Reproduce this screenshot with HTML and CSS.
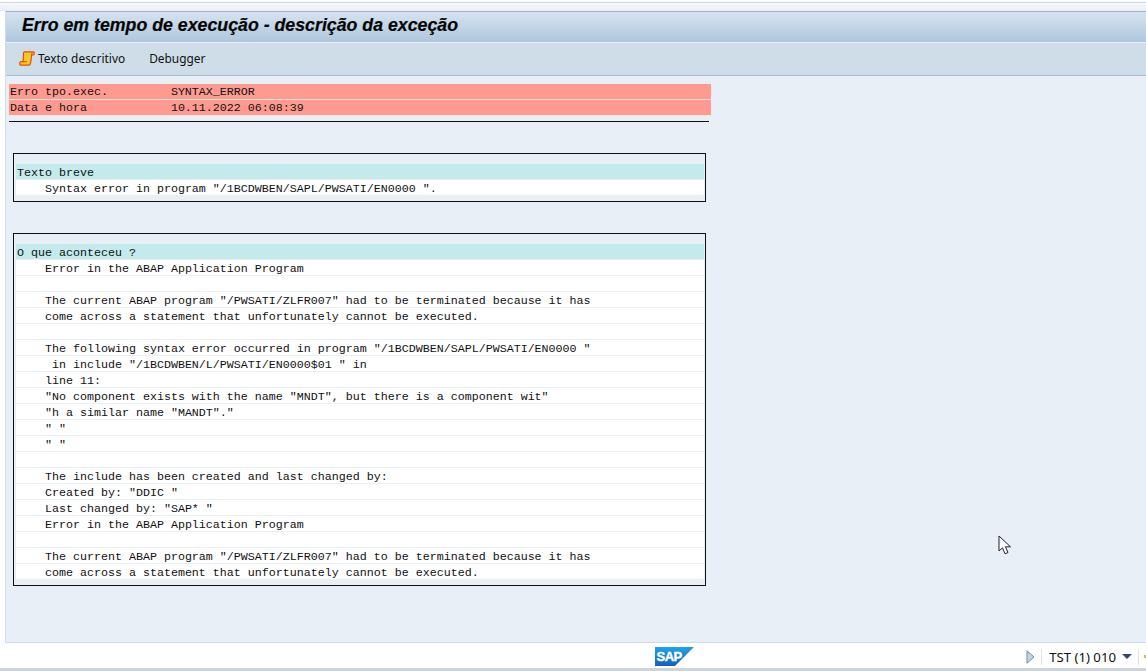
FILE: index.html
```html
<!DOCTYPE html>
<html lang="pt">
<head>
<meta charset="utf-8">
<title>Erro em tempo de execução</title>
<link rel="stylesheet" href="styles.css">
</head>
<body>
<div class="topstrip"></div>
<main class="window">
  <header class="titlebar"><h1>Erro em tempo de execução - descrição da exceção</h1></header>
  <nav class="toolbar">
    <span class="tool">
      <svg class="scroll" width="16" height="15" viewBox="0 0 16 15"><path d="M5.500.8h9c1 0 1 2.800-.2 3.200h-1.600l-1 7.500c-.2 1.600-1 2.700-2.400 2.700H1.600c-1.200 0-1.300-3.200.1-3.500h2.500L4.500 2C4.600 1 5 .8 5.500.8z" fill="#f9c81f" stroke="#dd4d17" stroke-width="1.200"/><path d="M12.700 4 13 1.500M4.200 10.700H8" stroke="#dd4d17" stroke-width="1" fill="none"/></svg>
      Texto descritivo
    </span>
    <span class="tool">Debugger</span>
  </nav>
  <section class="content">
    <div class="head">
      <div class="row red">Erro tpo.exec.         SYNTAX_ERROR</div>
      <div class="row red">Data e hora            10.11.2022 06:08:39</div>
    </div>
    <hr class="rule">
    <div class="box">
      <div class="row cyan">Texto breve</div>
      <div class="row">    Syntax error in program "/1BCDWBEN/SAPL/PWSATI/EN0000 ".</div>
    </div>
    <div class="box">
      <div class="row cyan">O que aconteceu ?</div>
      <div class="row">    Error in the ABAP Application Program</div>
      <div class="row"></div>
      <div class="row">    The current ABAP program "/PWSATI/ZLFR007" had to be terminated because it has</div>
      <div class="row">    come across a statement that unfortunately cannot be executed.</div>
      <div class="row"></div>
      <div class="row">    The following syntax error occurred in program "/1BCDWBEN/SAPL/PWSATI/EN0000 "</div>
      <div class="row">     in include "/1BCDWBEN/L/PWSATI/EN0000$01 " in</div>
      <div class="row">    line 11:</div>
      <div class="row">    "No component exists with the name "MNDT", but there is a component wit"</div>
      <div class="row">    "h a similar name "MANDT"."</div>
      <div class="row">    " "</div>
      <div class="row">    " "</div>
      <div class="row"></div>
      <div class="row">    The include has been created and last changed by:</div>
      <div class="row">    Created by: "DDIC "</div>
      <div class="row">    Last changed by: "SAP* "</div>
      <div class="row">    Error in the ABAP Application Program</div>
      <div class="row"></div>
      <div class="row">    The current ABAP program "/PWSATI/ZLFR007" had to be terminated because it has</div>
      <div class="row">    come across a statement that unfortunately cannot be executed.</div>
    </div>
    <svg class="cursor" width="14" height="21" viewBox="0 0 14 21"><path d="M1 1v15l3.500-3.200 2.500 6 3-1.300-2.600-5.700H12.500z" fill="#fff" stroke="#1c2333" stroke-width="1"/></svg>
  </section>
</main>
<footer class="status">
  <span class="sap">
    <svg width="39" height="19" viewBox="0 0 39 19"><defs><linearGradient id="sapg" x1="0" y1="0" x2="0" y2="1"><stop offset="0" stop-color="#1fa5ea"/><stop offset="1" stop-color="#1560b5"/></linearGradient></defs><path d="M0 0h39L20 19H0z" fill="url(#sapg)"/><text x="1.500" y="14" class="saptext">SAP</text></svg>
  </span>
  <span class="sysinfo">
    <svg class="play" width="9" height="14" viewBox="0 0 9 14"><path d="M1 .8v12.400L8 7z" fill="#c5d5e6" stroke="#6d8bab"/></svg>
    <span class="sep"></span>
    <span class="sysname">TST (1) 010</span>
    <svg class="drop" width="10" height="5" viewBox="0 0 10 5"><path d="M0 0h10L5 5z" fill="#35466a"/></svg>
    <span class="sep second-sep"></span>
    <span class="dot"></span>
  </span>
</footer>
</body>
</html>
```
FILE: styles.css
```css
html, body { margin: 0; padding: 0; }
body { width: 1146px; height: 671px; overflow: hidden; background: #fff; display: flex; flex-direction: column; font-family: "Noto Sans", sans-serif; }
.topstrip { height: 8px; margin-top: 2px; flex: none; border-top: 1px solid #cfd5df; background: linear-gradient(#f8fafc, #e9edf4); }
.window { flex: none; height: 632px; margin-left: 5px; border-left: 1px solid #d3dbe6; display: flex; flex-direction: column; }
.titlebar { flex: none; box-sizing: border-box; height: 32px; border-top: 1px solid #a5aebd; background: linear-gradient(#d5e3f0, #aec6dc); border-bottom: 1px solid #e8eff7; display: flex; align-items: center; padding: 0 0 3px 16px; }
.titlebar h1 { margin: 0; font: italic bold 17.75px "Liberation Sans", sans-serif; color: #050505; -webkit-text-stroke: 0.2px #050505; }
.toolbar { flex: none; height: 33px; box-sizing: border-box; background: #cfdde8; border-bottom: 1px solid #a9bccd; display: flex; align-items: center; gap: 24px; padding: 0 0 2px 13px; font-size: 11.9px; color: #111; }
.tool { display: flex; align-items: center; gap: 3px; }
.content { flex: 1; position: relative; background: #e8eff7; padding: 8px 0 0 3px; border-bottom: 1px solid #d3dbe6; }
.row { height: 16px; box-sizing: border-box; font: 11.67px/17px "Liberation Mono", monospace; padding: 1px 0 0 1px; white-space: pre; color: #111; background: #fff; border-bottom: 1px solid #e8eff7; }
.head { width: 702px; }
.red { background: #ff9a90; border-bottom-color: #fbe4e2; line-height: 16px; padding-top: 0; }
.rule { margin: 5px 0 0; width: 700px; height: 1px; border: 0; background: #111; }
.box { margin: 31px 0 0 4px; width: 693px; box-sizing: border-box; border: 1px solid #111; padding: 10px 1px 5px 2px; }
.cyan { background: #c3eaec; }
.cursor { position: absolute; left: 992px; top: 459px; }
.status { flex: 1; position: relative; display: flex; justify-content: flex-end; align-items: center; box-sizing: border-box; border-bottom: 3px solid #cfd3da; font-size: 13.2px; color: #111; }
.sap { position: absolute; left: 655px; top: 4px; display: flex; }
.saptext { font: bold 13px "Liberation Sans", sans-serif; letter-spacing: -0.5px; fill: #fff; stroke: #fff; stroke-width: 0.4px; }
.sysinfo { display: flex; align-items: center; padding-top: 2px; }
.play { margin-right: 6px; }
.sep { width: 1px; height: 16px; background: #dde3ea; }
.sysname { margin: 0 6px 0 7px; }
.second-sep { margin: 0 5px 0 6px; }
.dot { width: 2px; height: 3px; background: #f0b040; }
```
